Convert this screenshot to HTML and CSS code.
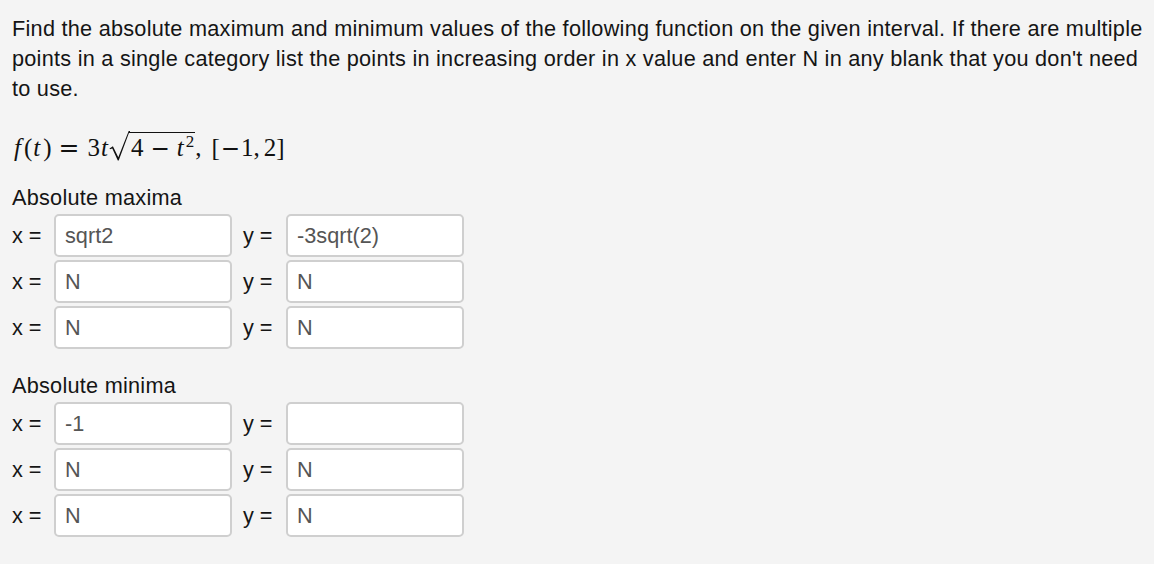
FILE: index.html
```html
<!DOCTYPE html>
<html>
<head>
<meta charset="utf-8">
<link rel="stylesheet" href="styles.css">
</head>
<body>
<div class="page">
  <p class="question">Find the absolute maximum and minimum values of the following function on the given interval. If there are multiple points in a single category list the points in increasing order in x value and enter N in any blank that you don't need to use.</p>
  <div class="formula"><span class="it f">f</span><span class="lp">(</span><span class="it targ">t</span>)<span class="sym rel">=</span>3<span class="it t2">t</span><svg class="rad" width="21" height="30" viewBox="0 0 21 30"><polygon points="0.5,17.4 3.9,15.3 9.3,26.2 19.7,0 21,0 21,1 20.3,1 9.7,29.6 8.8,29.6 3.3,17.4 1,18.2" fill="#111"/></svg><span class="under">4<span class="sym bin">−</span><span class="it">t</span><span class="sup">2</span></span><span class="comma">,</span><span class="lb">[</span><span class="sym neg">−</span>1<span class="comma2">,</span>2]</div>

  <div class="heading">Absolute maxima</div>
  <div class="rows">
    <div class="row"><span class="lbl">x =</span><div class="box">sqrt2</div><span class="lbl lbl-y">y =</span><div class="box">-3sqrt(2)</div></div>
    <div class="row"><span class="lbl">x =</span><div class="box">N</div><span class="lbl lbl-y">y =</span><div class="box">N</div></div>
    <div class="row"><span class="lbl">x =</span><div class="box">N</div><span class="lbl lbl-y">y =</span><div class="box">N</div></div>
  </div>

  <div class="heading heading-min">Absolute minima</div>
  <div class="rows">
    <div class="row"><span class="lbl">x =</span><div class="box">-1</div><span class="lbl lbl-y">y =</span><div class="box"></div></div>
    <div class="row"><span class="lbl">x =</span><div class="box">N</div><span class="lbl lbl-y">y =</span><div class="box">N</div></div>
    <div class="row"><span class="lbl">x =</span><div class="box">N</div><span class="lbl lbl-y">y =</span><div class="box">N</div></div>
  </div>
</div>
</body>
</html>
```

FILE: styles.css
```css
html, body {
  margin: 0;
  padding: 0;
  background: #f4f4f4;
}
body {
  font-family: "Liberation Sans", Arial, Helvetica, sans-serif;
  color: #151515;
  letter-spacing: 0.25px;
}
.page {
  padding: 14px 0 0 12px;
}
.question {
  margin: 0;
  font-size: 21.7px;
  line-height: 30px;
  width: 1142px;
}
.formula {
  font-family: "Liberation Serif", "Times New Roman", serif;
  font-size: 25px;
  line-height: 36px;
  height: 36px;
  margin-top: 26px;
  color: #111;
  white-space: nowrap;
  letter-spacing: 0;
}
.it {
  font-style: italic;
}
.f {
  margin-left: 2px;
  margin-right: 3px;
}
.targ {
  margin: 0 3px 0 1px;
}
.sym {
  font-family: "DejaVu Sans", sans-serif;
  font-size: 23px;
}
.rel {
  font-size: 25px;
  margin: 0 8px 0 7px;
}
.t2 {
  margin-left: 1px;
}
.rad {
  vertical-align: -5px;
  margin-left: 1px;
}
.under {
  display: inline-block;
  border-top: 1px solid #111;
  line-height: 24px;
  padding: 3px 1px 0 2px;
  margin-left: -1px;
}
.bin {
  margin: 0 7px 0 7px;
}
.sup {
  font-size: 17px;
  position: relative;
  top: -9px;
  margin-left: 2px;
}
.comma {
  margin-right: 10px;
}
.lb {
  margin-right: 1px;
}
.neg {
  margin-right: 1px;
}
.comma2 {
  margin-right: 4px;
}
.heading {
  font-size: 21.7px;
  line-height: 24px;
  margin-top: 20px;
}
.heading-min {
  margin-top: 25px;
}
.rows {
  display: flex;
  flex-direction: column;
  gap: 3px;
  margin-top: 4px;
}
.row {
  display: flex;
  align-items: center;
}
.lbl {
  font-size: 21.7px;
  width: 42px;
  letter-spacing: 0;
}
.lbl-y {
  width: 43px;
  margin-left: 11px;
}
.box {
  box-sizing: border-box;
  width: 178px;
  height: 43px;
  border: 2px solid #cfcfcf;
  border-radius: 5px;
  background: #fff;
  color: #555;
  font-size: 21.7px;
  line-height: 39px;
  padding-left: 9px;
  letter-spacing: 0;
}
```
